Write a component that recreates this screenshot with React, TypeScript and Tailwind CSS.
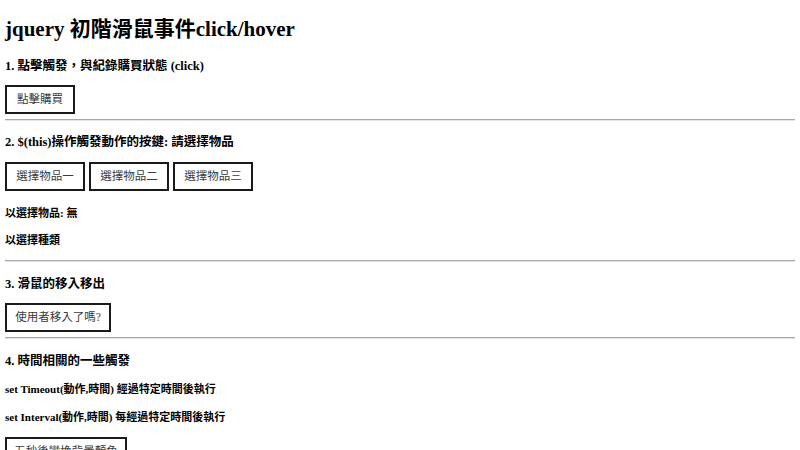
const serif = "font-['Liberation_Serif','Noto_Sans_CJK_TC',serif]";

function Btn({ children, w }: { children: React.ReactNode; w: string }) {
  return (
    <button
      className={`${w} h-[29px] border-2 border-[#1a1a1a] bg-white text-center text-[11.5px] leading-none text-[#3a3a3a] ${serif}`}
    >
      {children}
    </button>
  );
}

function Rule({ mt }: { mt: string }) {
  return <div className={`${mt} h-[2px] border-t border-[#a8a8a8] bg-[#e4e4e4]`} />;
}

export default function App() {
  return (
    <div className={`h-[450px] overflow-hidden bg-white px-[5px] pt-4 text-black ${serif}`}>
      <h1 className="text-[21px] font-bold leading-[26px]">jquery 初階滑鼠事件click/hover</h1>

      <h3 className="mt-[15px] text-[12.5px] font-bold leading-[18px]">1. 點擊觸發，與紀錄購買狀態 (click)</h3>
      <div className="mt-[10px] flex">
        <Btn w="w-[70px]">點擊購買</Btn>
      </div>
      <Rule mt="mt-[5px]" />

      <h3 className="mt-[12px] text-[12.5px] font-bold leading-[18px]">2. $(this)操作觸發動作的按鍵: 請選擇物品</h3>
      <div className="mt-[11px] flex gap-1">
        <Btn w="w-[80px]">選擇物品一</Btn>
        <Btn w="w-[80px]">選擇物品二</Btn>
        <Btn w="w-[80px]">選擇物品三</Btn>
      </div>
      <p className="mt-[15px] text-[11px] font-bold leading-[14px]">以選擇物品: 無</p>
      <p className="mt-[13px] text-[11px] font-bold leading-[14px]">以選擇種類</p>
      <Rule mt="mt-[13px]" />

      <h3 className="mt-[13px] text-[12.5px] font-bold leading-[18px]">3. 滑鼠的移入移出</h3>
      <div className="mt-[10px] flex">
        <Btn w="w-[106px]">使用者移入了嗎?</Btn>
      </div>
      <Rule mt="mt-[5px]" />

      <h3 className="mt-[13px] text-[12.5px] font-bold leading-[18px]">4. 時間相關的一些觸發</h3>
      <p className="mt-[12px] text-[11px] font-bold leading-[14px]">set Timeout(動作,時間) 經過特定時間後執行</p>
      <p className="mt-[14px] text-[11px] font-bold leading-[14px]">set Interval(動作,時間) 每經過特定時間後執行</p>
      <div className="mt-[13px] flex">
        <Btn w="w-[122px]">五秒後變換背景顏色</Btn>
      </div>
    </div>
  );
}
